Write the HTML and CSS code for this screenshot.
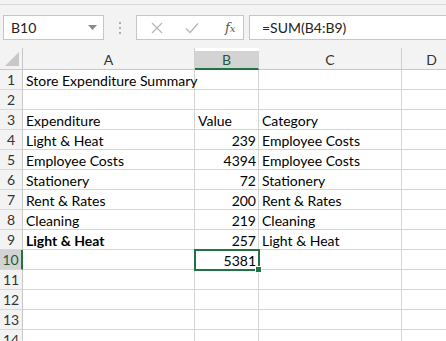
FILE: index.html
```html
<!DOCTYPE html>
<html>
<head>
<meta charset="utf-8">
<link rel="stylesheet" href="styles.css">
</head>
<body>
<div class="app">
  <div class="topstrip"></div>
  <div class="toolbar">
    <div class="namebox">
      <span class="ref">B10</span>
      <svg class="caret" width="9" height="5" viewBox="0 0 9 5"><path d="M0 0 L9 0 L4.5 5 Z" fill="#8a8a8a"/></svg>
    </div>
    <div class="dots"><span></span><span></span><span></span></div>
    <div class="fbuttons">
      <svg class="ico" width="12" height="12" viewBox="0 0 12 12"><path d="M1 1 L11 11 M11 1 L1 11" stroke="#b9b9b9" stroke-width="1.3" fill="none"/></svg>
      <svg class="ico" width="14" height="12" viewBox="0 0 14 12"><path d="M1 6.5 L5 10.5 L13 1.5" stroke="#b9b9b9" stroke-width="1.4" fill="none"/></svg>
      <span class="fx">f<span class="x">x</span></span>
    </div>
    <div class="formula">=SUM(B4:B9)</div>
  </div>
  <div class="sheet">
    <div class="corner"><svg width="14" height="14" viewBox="0 0 14 14"><path d="M14 0 L14 14 L0 14 Z" fill="#c8c8c8"/></svg></div>
    <div class="ch">A</div>
    <div class="ch sel">B</div>
    <div class="ch">C</div>
    <div class="ch">D</div>

    <div class="rh">1</div><div class="c">Store Expenditure Summary</div><div class="c"></div><div class="c"></div><div class="c"></div>
    <div class="rh">2</div><div class="c"></div><div class="c"></div><div class="c"></div><div class="c"></div>
    <div class="rh">3</div><div class="c">Expenditure</div><div class="c">Value</div><div class="c">Category</div><div class="c"></div>
    <div class="rh">4</div><div class="c">Light &amp; Heat</div><div class="c num">239</div><div class="c">Employee Costs</div><div class="c"></div>
    <div class="rh">5</div><div class="c">Employee Costs</div><div class="c num">4394</div><div class="c">Employee Costs</div><div class="c"></div>
    <div class="rh">6</div><div class="c">Stationery</div><div class="c num">72</div><div class="c">Stationery</div><div class="c"></div>
    <div class="rh">7</div><div class="c">Rent &amp; Rates</div><div class="c num">200</div><div class="c">Rent &amp; Rates</div><div class="c"></div>
    <div class="rh">8</div><div class="c">Cleaning</div><div class="c num">219</div><div class="c">Cleaning</div><div class="c"></div>
    <div class="rh">9</div><div class="c bold">Light &amp; Heat</div><div class="c num">257</div><div class="c">Light &amp; Heat</div><div class="c"></div>
    <div class="rh rsel">10</div><div class="c"></div><div class="c num active">5381<span class="handle"></span></div><div class="c"></div><div class="c"></div>
    <div class="rh">11</div><div class="c"></div><div class="c"></div><div class="c"></div><div class="c"></div>
    <div class="rh">12</div><div class="c"></div><div class="c"></div><div class="c"></div><div class="c"></div>
    <div class="rh">13</div><div class="c"></div><div class="c"></div><div class="c"></div><div class="c"></div>
    <div class="rh">14</div><div class="c"></div><div class="c"></div><div class="c"></div><div class="c"></div>
  </div>
</div>
</body>
</html>
```

FILE: styles.css
```css
html, body {
  margin: 0;
  padding: 0;
  background: #ffffff;
  overflow: hidden;
}
.app {
  width: 446px;
  height: 341px;
  overflow: hidden;
  font-family: "Lato", "Open Sans", sans-serif;
  color: #000;
}
.topstrip {
  height: 4px;
  background: #f3f3f3;
  border-bottom: 1px solid #d8d8d8;
}
.toolbar {
  height: 42px;
  background: #f3f3f3;
  display: flex;
  align-items: flex-start;
  padding-top: 10px;
  box-sizing: border-box;
  padding-left: 3px;
}
.namebox {
  width: 101px;
  height: 25px;
  box-sizing: border-box;
  background: #fff;
  border: 1px solid #c6c6c6;
  display: flex;
  align-items: center;
  justify-content: space-between;
  padding: 0 6px 0 7px;
  font-size: 14px;
  color: #222;
}
.dots {
  width: 32px;
  height: 25px;
  display: flex;
  flex-direction: column;
  align-items: center;
  justify-content: center;
  gap: 3px;
}
.dots span {
  width: 2px;
  height: 2px;
  background: #b0b0b0;
}
.fbuttons {
  width: 108px;
  height: 25px;
  box-sizing: border-box;
  background: #fff;
  border: 1px solid #c6c6c6;
  display: flex;
  align-items: center;
  padding-left: 14px;
  gap: 22px;
}
.fx {
  font-family: "DejaVu Serif", "Liberation Serif", serif;
  font-style: italic;
  font-size: 13px;
  color: #555;
  margin-left: 4px;
}
.fx .x {
  font-size: 10px;
}
.formula {
  margin-left: 5px;
  flex: 1;
  height: 25px;
  box-sizing: border-box;
  background: #fff;
  border: 1px solid #c6c6c6;
  border-right: none;
  padding-left: 12px;
  font-size: 14px;
  line-height: 23px;
  color: #222;
}
.sheet {
  display: grid;
  grid-template-columns: 23px 172px 64px 143px 60px;
  grid-template-rows: 22px repeat(14, 20px);
  border-top: 1px solid #f3f3f3;
}
.corner {
  background: #f3f3f3;
  border-right: 1px solid #c8c8c8;
  border-bottom: 1px solid #c8c8c8;
  box-sizing: border-box;
  display: flex;
  align-items: flex-end;
  justify-content: flex-end;
  padding: 0 3px 3px 0;
}
.ch {
  background: #f3f3f3;
  border-right: 1px solid #d0d0d0;
  border-bottom: 1px solid #c8c8c8;
  box-sizing: border-box;
  font-size: 14px;
  color: #333;
  text-align: center;
  line-height: 23px;
}
.ch.sel {
  background: #d3d3d3;
  border-bottom: 2px solid #217346;
  color: #1e5c38;
  margin-top: 3px;
  line-height: 17px;
}
.rh {
  background: #f3f3f3;
  border-right: 1px solid #c8c8c8;
  border-bottom: 1px solid #d8d8d8;
  box-sizing: border-box;
  font-size: 14px;
  color: #333;
  text-align: center;
  line-height: 20px;
}
.rh.rsel {
  background: #d3d3d3;
  border-right: 2px solid #217346;
  color: #1e5c38;
}
.c {
  border-right: 1px solid #d4d4d4;
  border-bottom: 1px solid #d4d4d4;
  box-sizing: border-box;
  font-size: 14px;
  line-height: 19px;
  padding: 1px 2px 0 3px;
  white-space: nowrap;
  overflow: visible;
  position: relative;
}
.c.num {
  text-align: right;
}
.c.bold {
  font-weight: bold;
}
.c.active {
  outline: 2px solid #217346;
  outline-offset: -1px;
  z-index: 1;
}
.handle {
  position: absolute;
  right: -4px;
  bottom: -4px;
  width: 5px;
  height: 5px;
  background: #217346;
  border: 1px solid #fff;
}
```
